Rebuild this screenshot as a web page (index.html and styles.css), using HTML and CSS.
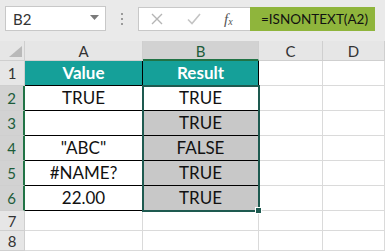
FILE: index.html
```html
<!DOCTYPE html>
<html>
<head>
<meta charset="utf-8">
<link rel="stylesheet" href="styles.css">
</head>
<body>
<div class="bar">
  <div class="namebox"><span>B2</span><svg class="caret" width="9" height="5" viewBox="0 0 9 5"><path d="M0 0h9L4.5 5z" fill="#7a7a7a"/></svg></div>
  <div class="dots"><i></i><i></i><i></i></div>
  <div class="fbox">
    <svg class="ico x" width="12" height="12" viewBox="0 0 12 12"><path d="M1 1l10 10M11 1L1 11" stroke="#b5b5b5" stroke-width="1.4"/></svg>
    <svg class="ico ok" width="14" height="12" viewBox="0 0 14 12"><path d="M1 6.5l4 4L13 1" stroke="#c4c4c4" stroke-width="1.6" fill="none"/></svg>
    <span class="fx">f<sub>x</sub></span>
  </div>
  <div class="formula">=ISNONTEXT(A2)</div>
</div>
<div class="sheet">
  <div class="grid">
    <div class="corner"><svg width="13" height="11" viewBox="0 0 13 11"><path d="M13 0V11H0z" fill="#b9b9b9"/></svg></div>
    <div class="ch">A</div><div class="ch sel">B</div><div class="ch">C</div><div class="ch">D</div>

    <div class="rh">1</div><div class="c hd">Value</div><div class="c hd hb">Result</div><div class="c"></div><div class="c"></div>
    <div class="rh sel">2</div><div class="c tv">TRUE</div><div class="c tv bv w">TRUE</div><div class="c"></div><div class="c"></div>
    <div class="rh sel">3</div><div class="c tv"></div><div class="c tv bv">TRUE</div><div class="c"></div><div class="c"></div>
    <div class="rh sel">4</div><div class="c tv">"ABC"</div><div class="c tv bv">FALSE</div><div class="c"></div><div class="c"></div>
    <div class="rh sel">5</div><div class="c tv">#NAME?</div><div class="c tv bv">TRUE</div><div class="c"></div><div class="c"></div>
    <div class="rh sel">6</div><div class="c tv">22.00</div><div class="c tv bv">TRUE</div><div class="c"></div><div class="c"></div>
    <div class="rh sm">7</div><div class="c"></div><div class="c"></div><div class="c"></div><div class="c"></div>
    <div class="rh sm">8</div><div class="c"></div><div class="c"></div><div class="c"></div><div class="c"></div>
  </div>
  <div class="selbox"><span class="handle"></span></div>
</div>
</body>
</html>
```
FILE: styles.css
```css
html, body { margin: 0; padding: 0; }
body {
  width: 385px; height: 252px; overflow: hidden;
  background: #fff;
  font-family: Lato, "Open Sans", sans-serif;
}
.bar {
  height: 41px; background: #eaeaea;
  display: flex; align-items: flex-start;
  box-sizing: border-box; padding-top: 6px;
}
.namebox {
  margin-left: 5px; width: 101px; height: 25px; box-sizing: border-box;
  background: #fff; border: 1px solid #c8c8c8;
  display: flex; align-items: center; justify-content: space-between;
  padding: 0 6px 0 7px; font-size: 15px; color: #333;
}
.caret { margin-top: -2px; }
.dots { width: 32px; display: flex; flex-direction: column; align-items: center; gap: 3px; padding-top: 7px; }
.dots i { width: 2px; height: 2px; background: #9a9a9a; display: block; }
.fbox {
  width: 112px; margin-top: 1px; height: 24px; box-sizing: border-box;
  background: #fff; border: 1px solid #c8c8c8; border-right: 0;
  display: flex; align-items: center;
}
.ico.x { margin-left: 12px; }
.ico.ok { margin-left: 24px; }
.fx { margin-left: 23px; font-family: "Liberation Serif", serif; font-style: italic; font-size: 15px; color: #555; }
.fx sub { font-size: 10px; vertical-align: -1px; }
.formula {
  margin-top: 1px; width: 125px; height: 24px;
  background: #8fb53c; color: #111; font-size: 13.5px; line-height: 24px;
  box-sizing: border-box; padding-left: 11px; white-space: nowrap;
}
.sheet { position: relative; }
.grid {
  display: grid;
  grid-template-columns: 25px 118px 116px 64px 62px;
  grid-template-rows: 20px repeat(6, 25px) 20px 20px;
}
.corner { background: #e6e6e6; border-right: 1px solid #cfcfcf; border-bottom: 1px solid #cfcfcf; box-sizing: border-box; display: flex; align-items: flex-end; justify-content: flex-end; padding: 0 2px 3px 0; }
.ch {
  background: #e6e6e6; border-right: 1px solid #cfcfcf; border-bottom: 1px solid #cfcfcf;
  box-sizing: border-box; text-align: center; font-size: 15px; line-height: 20px; color: #333;
}
.ch.sel { background: #d2d2d2; border-bottom: 2px solid #217346; color: #1c5c3a; }
.rh {
  background: #e6e6e6; border-bottom: 1px solid #cfcfcf; border-right: 1px solid #cfcfcf;
  box-sizing: border-box; text-align: center; font-size: 15px; line-height: 25px; color: #333;
}
.rh.sm { line-height: 20px; }
.rh.sel { background: #d2d2d2; border-right: 2px solid #217346; color: #1c5c3a; }
.c { border-right: 1px solid #dadada; border-bottom: 1px solid #dadada; box-sizing: border-box; }
.hd {
  background: #15a099; color: #fff; font-weight: bold; font-size: 17px;
  text-align: center; line-height: 24px; border-right: 1px solid #000; border-bottom: 1px solid #000;
}
.tv { text-align: center; font-size: 17px; line-height: 24px; color: #111; border-right: 1px solid #000; border-bottom: 1px solid #000; }
.bv { background: #c8c8c8; }
.bv.w { background: #fff; }
.selbox {
  position: absolute; left: 142px; top: 44px; width: 118px; height: 127px;
  border: 2px solid #1e5a50; box-sizing: border-box;
}
.handle { position: absolute; right: -4px; bottom: -4px; width: 5px; height: 5px; background: #1e5a50; border: 1px solid #fff; }
```
